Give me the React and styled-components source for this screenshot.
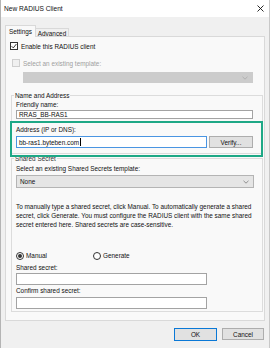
import React from 'react';
import styled, { createGlobalStyle } from 'styled-components';

const GlobalStyle = createGlobalStyle`
  html, body {
    margin: 0;
    padding: 0;
    background: #f0f0f0;
  }
  body {
    font-family: "Liberation Sans", Arial, sans-serif;
    font-size: 6.4px;
    color: #000;
  }
  * {
    box-sizing: border-box;
  }
`;

// 체크 표시
const CheckMark = () => (
  <svg width="6" height="6" viewBox="0 0 6 6">
    <polyline points="0.6,3.2 2.3,4.9 5.4,1" fill="none" stroke="#222" strokeWidth="0.9" />
  </svg>
);

const Chevron = ({ color }) => (
  <svg width="6" height="4" viewBox="0 0 6 4">
    <polyline points="0.5,0.8 3,3.2 5.5,0.8" fill="none" stroke={color} strokeWidth="0.8" />
  </svg>
);

const CloseIcon = () => (
  <svg width="7" height="7" viewBox="0 0 7 7">
    <line x1="0.5" y1="0.5" x2="6.5" y2="6.5" stroke="#111" strokeWidth="0.9" />
    <line x1="6.5" y1="0.5" x2="0.5" y2="6.5" stroke="#111" strokeWidth="0.9" />
  </svg>
);

const App = () => {
  return (
    <>
      <GlobalStyle />
      <Window>
        <TitleBar>
          <Title>New RADIUS Client</Title>
          <CloseButton>
            <CloseIcon />
          </CloseButton>
        </TitleBar>
        <Body>
          <TabStrip>
            <Tab active>Settings</Tab>
            <Tab>Advanced</Tab>
          </TabStrip>
          <Panel>
            <CheckRow>
              <CheckBox>
                <CheckMark />
              </CheckBox>
              <span>Enable this RADIUS client</span>
            </CheckRow>
            <CheckRow disabled indent={2}>
              <CheckBox disabled />
              <span>Select an existing template:</span>
            </CheckRow>
            <DisabledSelect>
              <Chevron color="#a8a8a8" />
            </DisabledSelect>

            <Group>
              <GroupTitle>Name and Address</GroupTitle>
              <Label>Friendly name:</Label>
              <TextBox gap={1}>RRAS_BB-RAS1</TextBox>
              <Highlight>
                <Label>Address (IP or DNS):</Label>
                <InputRow>
                  <TextBox focused>
                    bb-ras1.byteben.com
                    <Caret />
                  </TextBox>
                  <Button width={44}>Verify...</Button>
                </InputRow>
              </Highlight>
            </Group>

            <Group second>
              <GroupTitle dim>Shared Secret</GroupTitle>
              <Label gap={1}>Select an existing Shared Secrets template:</Label>
              <Select>
                <span>None</span>
                <Chevron color="#7a7a7a" />
              </Select>
              <Paragraph>
                <Line>To manually type a shared secret, click Manual. To automatically generate a shared</Line>
                <Line>secret, click Generate. You must configure the RADIUS client with the same shared</Line>
                <Line>secret entered here. Shared secrets are case-sensitive.</Line>
              </Paragraph>
              <RadioRow>
                <RadioOption width={77}>
                  <Radio checked />
                  <span>Manual</span>
                </RadioOption>
                <RadioOption>
                  <Radio />
                  <span>Generate</span>
                </RadioOption>
              </RadioRow>
              <Label gap={3}>Shared secret:</Label>
              <TextBox gap={1} width={191} />
              <Label gap={1}>Confirm shared secret:</Label>
              <TextBox gap={2} width={191} />
            </Group>
          </Panel>
          <Footer>
            <Button width={43} primary>OK</Button>
            <Button width={42}>Cancel</Button>
          </Footer>
        </Body>
      </Window>
    </>
  );
};

export default App;

const Window = styled.div`
  width: 270px;
  height: 348px;
  display: flex;
  flex-direction: column;
  background: #f0f0f0;
  border-left: 1px solid #b4b4b4;
  border-right: 1px solid #c8c8c8;
`;

const TitleBar = styled.div`
  height: 17px;
  flex-shrink: 0;
  display: flex;
  align-items: center;
  justify-content: space-between;
  background: #ffffff;
  padding: 0 5px 0 3px;
`;

const Title = styled.span`
  font-size: 6.6px;
  color: #111;
`;

const CloseButton = styled.span`
  display: flex;
  align-items: center;
`;

const Body = styled.div`
  flex: 1;
  display: flex;
  flex-direction: column;
  padding: 8px 4px 0 4px;
`;

const TabStrip = styled.div`
  height: 11px;
  display: flex;
  align-items: flex-end;
`;

const Tab = styled.div`
  position: relative;
  z-index: 1;
  display: flex;
  align-items: center;
  justify-content: center;
  width: ${({ active }) => (active ? 31 : 33)}px;
  height: ${({ active }) => (active ? 12 : 8)}px;
  margin-bottom: ${({ active }) => (active ? -1 : 0)}px;
  padding-top: ${({ active }) => (active ? 0 : 1)}px;
  border: 1px solid #d9d9d9;
  border-bottom: none;
  border-left: ${({ active }) => (active ? '1px solid #d9d9d9' : 'none')};
  background: ${({ active }) => (active ? '#f9f9f9' : '#f0f0f0')};
  color: #111;
`;

const Panel = styled.div`
  height: 285px;
  flex-shrink: 0;
  display: flex;
  flex-direction: column;
  border: 1px solid #d9d9d9;
  background: #f9f9f9;
  padding: 4px 0 0 4px;
`;

const CheckRow = styled.div`
  height: 10px;
  display: flex;
  align-items: center;
  gap: 3px;
  padding-left: ${({ indent }) => indent || 0}px;
  margin-top: ${({ disabled }) => (disabled ? 7 : 0)}px;
  color: ${({ disabled }) => (disabled ? '#a0a0a0' : '#111')};
`;

const CheckBox = styled.span`
  width: 8px;
  height: 8px;
  display: flex;
  align-items: center;
  justify-content: center;
  border: 1px solid ${({ disabled }) => (disabled ? '#cfcfcf' : '#333')};
  background: ${({ disabled }) => (disabled ? '#f0f0f0' : '#fff')};
`;

const DisabledSelect = styled.div`
  height: 11px;
  margin: 4px 11px 0 13px;
  display: flex;
  align-items: center;
  justify-content: flex-end;
  padding-right: 5px;
  background: #cccccc;
`;

const Group = styled.div`
  display: flex;
  flex-direction: column;
  margin: ${({ second }) => (second ? 4 : 12)}px 1px 0 1px;
  padding: 0 9px ${({ second }) => (second ? 2 : 0)}px 4px;
  border: 1px solid #dcdcdc;
`;

const GroupTitle = styled.div`
  align-self: flex-start;
  margin: -5px 0 0 -2px;
  padding: 0 1px;
  line-height: 9px;
  background: #f9f9f9;
  color: ${({ dim }) => (dim ? '#333' : '#111')};
`;

const Label = styled.div`
  line-height: 9px;
  margin-top: ${({ gap }) => gap || 0}px;
  color: #111;
  white-space: nowrap;
`;

const TextBox = styled.div`
  height: 12px;
  flex-shrink: 0;
  display: flex;
  align-items: center;
  margin-top: ${({ gap }) => gap || 0}px;
  ${({ width }) => (width ? `width: ${width}px;` : 'flex: 1;')}
  padding-left: 2px;
  background: #fff;
  border: 1px solid ${({ focused }) => (focused ? '#4a95e2' : '#a3a3a3')};
  color: #111;
  white-space: nowrap;
`;

const Caret = styled.span`
  width: 1px;
  height: 8px;
  margin-left: 0.5px;
  background: #000;
`;

const Highlight = styled.div`
  position: relative;
  z-index: 2;
  display: flex;
  flex-direction: column;
  margin: 2px -10px -4px -6px;
  padding: 2px 8px 7px 4px;
  border: 2px solid #1ea886;
`;

const InputRow = styled.div`
  display: flex;
  gap: 2px;
  margin-top: 2px;
  height: 12px;
`;

const Button = styled.div`
  width: ${({ width }) => width}px;
  height: ${({ primary }) => (primary ? 13 : 12)}px;
  flex-shrink: 0;
  display: flex;
  align-items: center;
  justify-content: center;
  background: #e1e1e1;
  border: 1px solid ${({ primary }) => (primary ? '#0a78d6' : '#adadad')};
  color: #111;
`;

const Select = styled.div`
  height: 13px;
  margin: 2px -1px 0 0;
  display: flex;
  align-items: center;
  justify-content: space-between;
  padding: 0 4px 0 3px;
  background: #e5e5e5;
  border: 1px solid #b4b4b4;
  color: #111;
`;

const Paragraph = styled.div`
  margin-top: 14px;
  line-height: 9px;
  color: #111;
`;

const Line = styled.div`
  white-space: nowrap;
`;

const RadioRow = styled.div`
  display: flex;
  height: 9px;
  margin-top: 22px;
`;

const RadioOption = styled.div`
  display: flex;
  align-items: center;
  gap: 2px;
  ${({ width }) => (width ? `width: ${width}px;` : '')}
  color: #111;
`;

const Radio = styled.span`
  width: 8px;
  height: 8px;
  border-radius: 50%;
  border: 1px solid #333;
  background: #fff;
  display: flex;
  align-items: center;
  justify-content: center;

  &::after {
    content: "";
    width: 4px;
    height: 4px;
    border-radius: 50%;
    background: ${({ checked }) => (checked ? '#333' : 'transparent')};
  }
`;

const Footer = styled.div`
  display: flex;
  justify-content: flex-end;
  gap: 5px;
  margin: 7px 1px 0 0;
`;
